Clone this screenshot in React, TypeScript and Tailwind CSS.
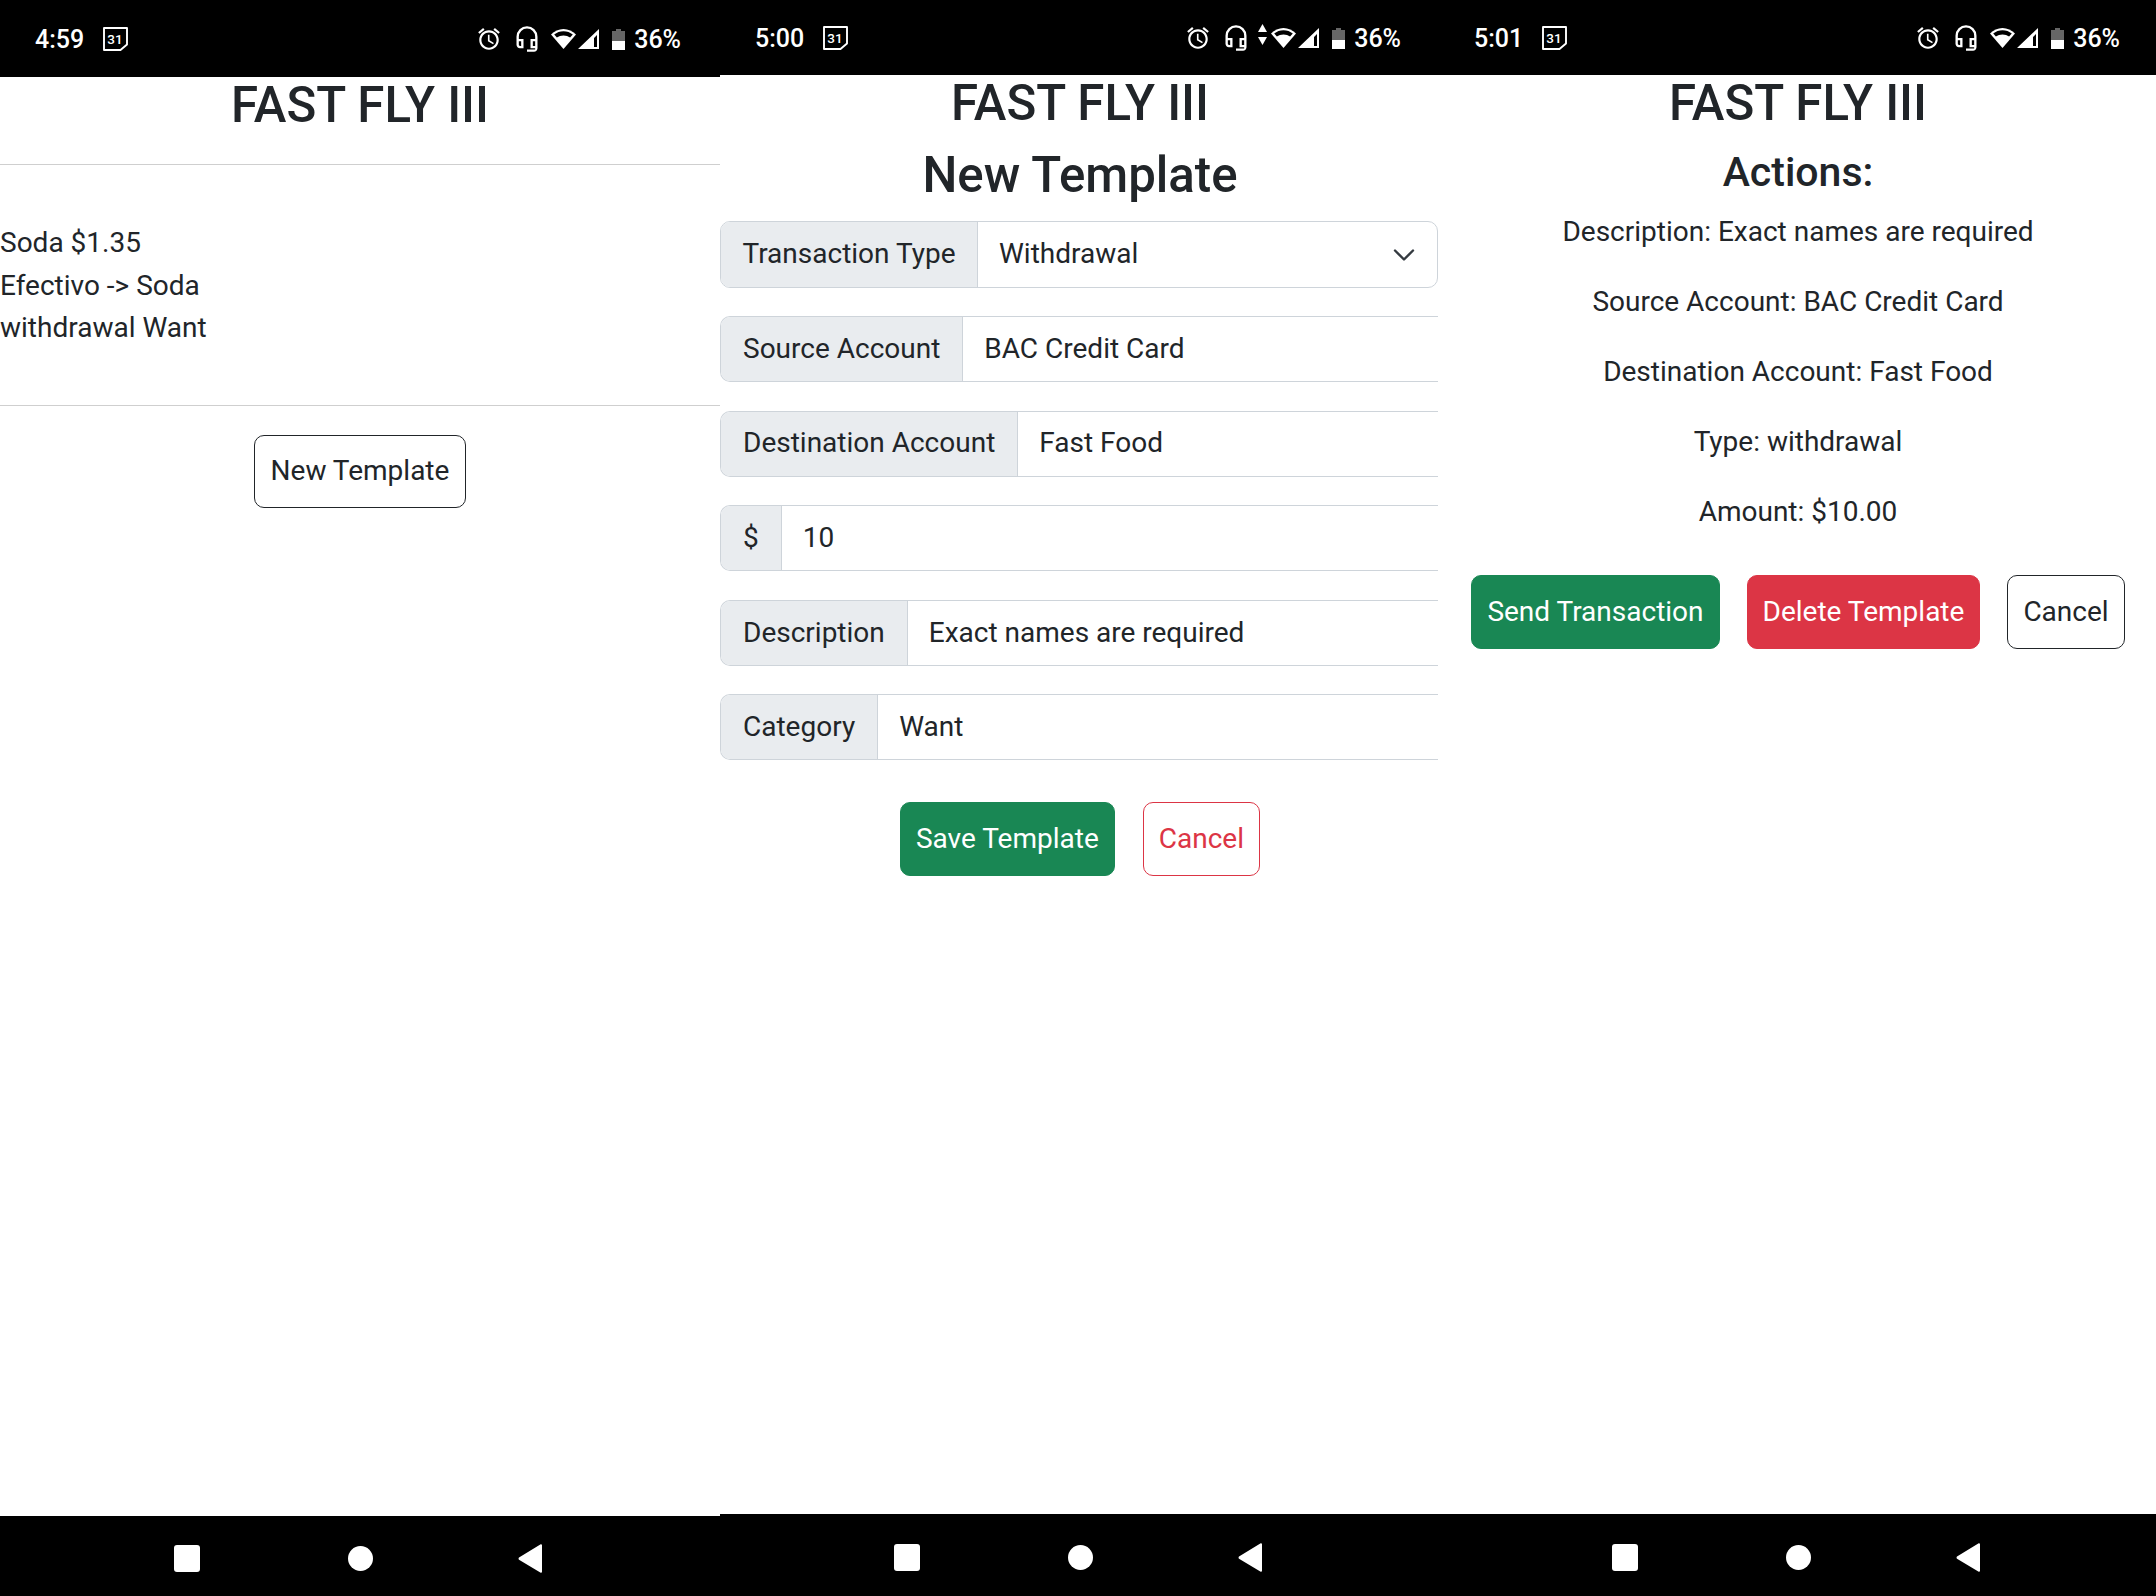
import React from "react";

const ALARM =
  "M22 5.72l-4.6-3.86-1.29 1.53 4.6 3.86L22 5.72zM7.88 3.39L6.6 1.86 2 5.71l1.29 1.53 4.59-3.85zM12.5 8H11v6l4.75 2.85.75-1.23-4-2.37V8zM12 4c-4.97 0-9 4.03-9 9s4.03 9 9 9 9-4.03 9-9-4.03-9-9-9zm0 16c-3.87 0-7-3.13-7-7s3.13-7 7-7 7 3.13 7 7-3.13 7-7 7z";
const HEADSET =
  "M12 1a9 9 0 0 0-9 9v7c0 1.66 1.34 3 3 3h3v-8H5v-2a7 7 0 0 1 14 0v2h-4v8h4v1h-7v2h6c1.66 0 3-1.34 3-3V10a9 9 0 0 0-9-9zM7 14v4H6c-.55 0-1-.45-1-1v-3h2zm12 4h-2v-4h2v4z";

const CalendarIcon = () => (
  <svg viewBox="0 0 25 24" className="w-[25px] h-[24px] ml-[19px]">
    <path d="M1 1h23v16.5L17.5 23H1z" fill="none" stroke="#fff" strokeWidth="1.9" strokeLinejoin="round" />
    <text x="12" y="16.6" textAnchor="middle" fill="#fff" fontSize="13.5" fontWeight="500" fontFamily="Roboto, sans-serif">
      31
    </text>
  </svg>
);

const WifiIcon = () => (
  <svg viewBox="0 0 25 20" className="w-[25px] h-[20px]">
    <path d="M12.5 20L0 5.6C3.4 2.2 7.8 0 12.5 0s9.1 2.2 12.5 5.6z" fill="#fff" />
    <path d="M5.9 8.6L3.2 5.5C5.8 3.4 9 2.2 12.5 2.2s6.7 1.2 9.3 3.3l-2.7 3.1C17.2 7.2 15 6.4 12.5 6.4S7.8 7.2 5.9 8.6z" fill="#000" />
  </svg>
);

const SignalIcon = () => (
  <svg viewBox="0 0 21 20" className="w-[21px] h-[20px]">
    <path fillRule="evenodd" d="M21 0L0 20h21zM19 6l-3 3v9h3z" fill="#fff" />
  </svg>
);

const BatteryIcon = () => (
  <svg viewBox="0 0 13 21" className="w-[13px] h-[21px]">
    <path d="M4 0h5v2h4v11H0V2h4z" fill="#666" />
    <path d="M0 12h13v9H0z" fill="#fff" />
  </svg>
);

const SyncArrows = () => (
  <svg viewBox="0 0 9 22" className="w-[9px] h-[22px] mr-[4px] -mt-[6px]">
    <path d="M4.5 0L9 8H0zM0 13h9l-4.5 8z" fill="#fff" />
  </svg>
);

const StatusBar = ({ time, tall, sync, right }: { time: string; tall?: boolean; sync?: boolean; right?: boolean }) => (
  <div
    className={`flex items-center justify-between bg-black text-white pt-[1px] shrink-0 ${tall ? "h-[77px]" : "h-[75px]"} ${
      right ? "pl-[34px] pr-[36px]" : "pl-[35px] pr-[39px]"
    }`}
  >
    <div className="flex items-center">
      <span className="text-[25px] font-medium leading-none">{time}</span>
      <CalendarIcon />
    </div>
    <div className="flex items-center">
      <svg viewBox="0 0 24 24" fill="#fff" className="w-[26px] h-[26px]">
        <path d={ALARM} />
      </svg>
      <svg viewBox="0 0 24 24" fill="#fff" className={`w-[28px] h-[28px] ml-[11px] ${sync ? "mr-[8px]" : "mr-[10px]"}`}>
        <path d={HEADSET} />
      </svg>
      {sync && <SyncArrows />}
      <WifiIcon />
      <div className="ml-[2px]">
        <SignalIcon />
      </div>
      <div className="ml-[13px] mr-[9px]">
        <BatteryIcon />
      </div>
      <span className="text-[25px] font-medium leading-none">36%</span>
    </div>
  </div>
);

const NavBar = () => (
  <div className="flex-1 bg-black flex items-center justify-center pr-[3px] pt-[4px]">
    <div className="w-[26px] h-[27px] bg-white rounded-[3px]" />
    <div className="w-[25px] h-[25px] bg-white rounded-full ml-[148px] mr-[145px]" />
    <svg viewBox="0 0 25 29" className="w-[25px] h-[29px]">
      <path d="M24 1.2v26.6c0 1-1 1.3-1.7.6L1 15.8c-.6-.7-.6-1.7 0-2.4L22.3.6C23 0 24 .3 24 1.2z" fill="#fff" />
    </svg>
  </div>
);

const Title = () => (
  <h1 className="h-[56px] leading-[56px] text-center text-[49.2px] font-medium">FAST FLY III</h1>
);

const Field = ({ label, value }: { label: string; value: string }) => (
  <div className="flex h-[66px] mr-[2px] border-y border-l border-[#ced4da] rounded-l-[10px]">
    <div className="flex items-center bg-[#e9ecef] border-r border-[#ced4da] rounded-l-[9px] px-[22px]">{label}</div>
    <div className="flex items-center px-[21px]">{value}</div>
  </div>
);

const SelectField = ({ label, value }: { label: string; value: string }) => (
  <div className="flex h-[67px] -mt-px mr-[2px] border border-[#ced4da] rounded-[10px]">
    <div className="flex items-center bg-[#e9ecef] border-r border-[#ced4da] rounded-l-[9px] px-[21.5px] pt-[1px]">{label}</div>
    <div className="flex flex-1 items-center justify-between pl-[21px] pr-[21px] pt-[1px]">
      <span>{value}</span>
      <svg viewBox="0 0 16 16" fill="none" stroke="#343a40" strokeWidth="1.6" strokeLinecap="round" strokeLinejoin="round" className="w-[24px] h-[24px]">
        <path d="m2 5 6 6 6-6" />
      </svg>
    </div>
  </div>
);

const btn = "h-[74px] px-[15px] rounded-[10px] border";

export default function App() {
  return (
    <div
      className="flex w-[2156px] h-[1596px] overflow-hidden bg-white text-[#212529] text-[28px] leading-[42.5px]"
      style={{ fontFamily: "Roboto, sans-serif" }}
    >
      {/* list */}
      <div className="flex flex-col w-[720px] h-full shrink-0">
        <StatusBar time="4:59" tall />
        <div className="h-[1439px] shrink-0">
          <Title />
          <div className="mt-[31px] border-t border-[#cfcfcf] pt-[57px] pb-[55px] border-b">
            <p>Soda $1.35</p>
            <p>Efectivo -&gt; Soda</p>
            <p>withdrawal Want</p>
          </div>
          <div className="flex justify-center mt-[29px]">
            <button className="h-[73px] px-[15.5px] rounded-[10px] border border-[#212529]">New Template</button>
          </div>
        </div>
        <NavBar />
      </div>

      {/* new template */}
      <div className="flex flex-col w-[720px] h-full shrink-0">
        <StatusBar time="5:00" sync />
        <div className="h-[1439px] shrink-0">
          <Title />
          <h2 className="mt-[14px] mb-[16.5px] h-[60px] leading-[60px] text-center text-[49.2px] font-medium">New Template</h2>
          <div className="flex flex-col gap-[28.6px]">
            <SelectField label="Transaction Type" value="Withdrawal" />
            <Field label="Source Account" value="BAC Credit Card" />
            <Field label="Destination Account" value="Fast Food" />
            <Field label="$" value="10" />
            <Field label="Description" value="Exact names are required" />
            <Field label="Category" value="Want" />
          </div>
          <div className="flex justify-center gap-[28px] mt-[42px]">
            <button className={`${btn} bg-[#198754] border-[#198754] text-white`}>Save Template</button>
            <button className={`${btn} border-[#dc3545] text-[#dc3545]`}>Cancel</button>
          </div>
        </div>
        <NavBar />
      </div>

      {/* actions */}
      <div className="flex flex-col w-[716px] h-full shrink-0">
        <StatusBar time="5:01" right />
        <div className="h-[1439px] shrink-0 text-center">
          <Title />
          <h3 className="mt-[14px] mb-[12px] h-[54px] leading-[54px] text-[41px] font-medium">Actions:</h3>
          <div className="flex flex-col gap-[27.6px]">
            <p>Description: Exact names are required</p>
            <p>Source Account: BAC Credit Card</p>
            <p>Destination Account: Fast Food</p>
            <p>Type: withdrawal</p>
            <p>Amount: $10.00</p>
          </div>
          <div className="flex justify-center gap-[27px] mt-[41px]">
            <button className={`${btn} bg-[#198754] border-[#198754] text-white`}>Send Transaction</button>
            <button className={`${btn} bg-[#dc3545] border-[#dc3545] text-white`}>Delete Template</button>
            <button className={`${btn} border-[#212529]`}>Cancel</button>
          </div>
        </div>
        <NavBar />
      </div>
    </div>
  );
}
